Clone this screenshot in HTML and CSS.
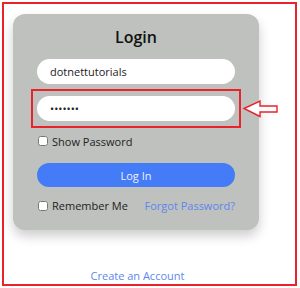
FILE: index.html
```html
<!DOCTYPE html>
<html lang="en">
<head>
    <meta charset="UTF-8">
    <meta name="viewport" content="width=device-width, initial-scale=1.0">
    <title>Login</title>
    <link rel="stylesheet" href="styles.css">
</head>

<body>
    <div class="frame">
        <div class="login-card">
            <h2>Login</h2>
            <form id="loginForm">
                <input type="text" class="field" value="dotnettutorials">
                <div class="highlight">
                    <input type="password" class="field" value="1234567">
                    <svg class="arrow" width="38" height="20" viewBox="0 0 38 20">
                        <polygon points="2,9.5 18,2 18,7 35,7 35,13 18,13 18,17.5" fill="#fff" stroke="#e8232c" stroke-width="1.4"/>
                    </svg>
                </div>
                <label class="check-row">
                    <input type="checkbox"> Show Password
                </label>
                <button type="button" class="login-btn">Log In</button>
                <div class="bottom-row">
                    <label class="check-row">
                        <input type="checkbox"> Remember Me
                    </label>
                    <a href="#" class="link">Forgot Password?</a>
                </div>
            </form>
        </div>
        <a href="#" class="link create">Create an Account</a>
    </div>
</body>
</html>
```

FILE: styles.css
```css
/* General Styles */
body {
    font-family: "Open Sans", "Noto Sans", sans-serif;
    color: #222;
    margin: 0;
    padding: 0;
    background-color: #fff;
}

.frame {
    margin: 2px 0 0 2px;
    width: 291px;
    height: 280px;
    border: 2px solid #e8232c;
    display: flex;
    flex-direction: column;
    align-items: flex-start;
}

/* Card */
.login-card {
    margin: 10px 0 0 9px;
    width: 198px;
    padding: 12px 24px 18px;
    background-color: #bec1bd;
    border-radius: 12px;
    box-shadow: 0 6px 12px rgba(0, 0, 0, 0.2);
}

h2 {
    margin: 0 0 11px;
    text-align: center;
    font-size: 16px;
    font-weight: 600;
    line-height: 22px;
    color: #111;
}

/* Form */
.field {
    display: block;
    box-sizing: border-box;
    width: 198px;
    height: 25px;
    margin: 0;
    padding: 0 13px;
    border: none;
    border-radius: 13px;
    background-color: #fff;
    font-family: inherit;
    font-size: 11px;
    color: #222;
    outline: none;
}

.highlight {
    position: relative;
    margin: 5px -6px 0;
    padding: 5px 4px;
    border: 2px solid #e8232c;
}

.arrow {
    position: absolute;
    left: 209px;
    top: 8px;
}

.check-row {
    display: flex;
    align-items: center;
    gap: 4px;
    font-size: 11px;
    color: #222;
}

.check-row input {
    width: 10px;
    height: 10px;
    margin: 0 0 0 1px;
}

form > .check-row {
    margin-top: 7px;
    height: 12px;
}

.login-btn {
    display: block;
    width: 198px;
    height: 24px;
    margin-top: 16px;
    border: none;
    border-radius: 12px;
    background-color: #447bf7;
    color: #eef2ff;
    font-family: inherit;
    font-size: 11px;
    cursor: pointer;
}

.bottom-row {
    display: flex;
    justify-content: space-between;
    align-items: center;
    margin-top: 12px;
    height: 13px;
}

.link {
    color: #5d87ee;
    font-size: 11px;
    text-decoration: none;
}

.create {
    align-self: center;
    margin: 38px 0 0 -24px;
}
```
